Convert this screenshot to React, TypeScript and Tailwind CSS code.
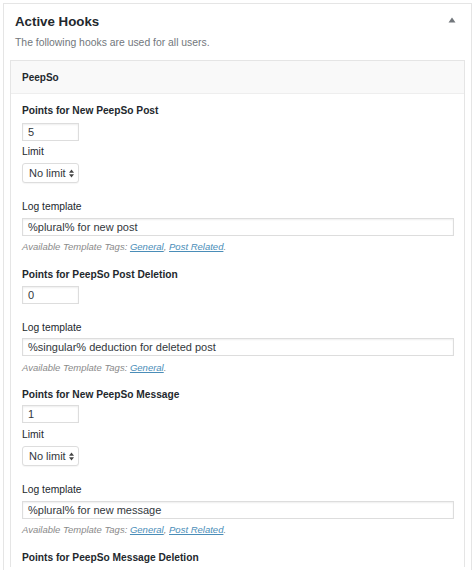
import React from 'react';

const font = { fontFamily: '"Liberation Sans", Arial, sans-serif' };

function NumberInput({ value }: { value: string }) {
  return (
    <div className="w-[57px] h-[18px] border border-[#dddddd] bg-white shadow-[inset_0_1px_2px_rgba(0,0,0,0.07)] px-[5px] text-[11px] leading-[16px] text-[#32373c]">
      {value}
    </div>
  );
}

function TextInput({ value }: { value: string }) {
  return (
    <div className="w-[432px] h-[18px] border border-[#dddddd] bg-white shadow-[inset_0_1px_2px_rgba(0,0,0,0.07)] px-[5px] text-[11px] leading-[16px] text-[#32373c] whitespace-nowrap">
      {value}
    </div>
  );
}

function LimitSelect() {
  return (
    <div className="w-[57px] h-[20px] border border-[#dddddd] rounded-[3px] bg-white shadow-[0_1px_1px_rgba(0,0,0,0.04)] pl-[6px] pr-[4px] flex items-center justify-between text-[11px] text-[#32373c] whitespace-nowrap">
      <span>No limit</span>
      <svg width="5" height="9" viewBox="0 0 5 9">
        <path d="M2.5 0.5 L5 3.8 L0 3.8 Z" fill="#444" />
        <path d="M2.5 8.5 L5 5.2 L0 5.2 Z" fill="#444" />
      </svg>
    </div>
  );
}

function Tags({ post }: { post?: boolean }) {
  return (
    <div className="h-[14px] leading-[14px] text-[9.5px] italic text-[#8a8a8a] whitespace-nowrap">
      Available Template Tags: <span className="underline text-[#4a8db8]">General</span>
      {post && (
        <>
          , <span className="underline text-[#4a8db8]">Post Related</span>
        </>
      )}
      .
    </div>
  );
}

function Label({ children, bold, className = '' }: { children: React.ReactNode; bold?: boolean; className?: string }) {
  return (
    <div className={`h-[18px] leading-[18px] whitespace-nowrap text-[#23282d] ${bold ? 'font-bold text-[10.2px]' : 'text-[10.3px]'} ${className}`}>
      {children}
    </div>
  );
}

export default function App() {
  return (
    <div className="w-[474px] h-[570px] bg-white overflow-hidden pt-[3px] pl-[3px]" style={font}>
      <div className="w-[469px] h-[580px] border border-[#e5e5e5] bg-white">
        {/* Panel heading */}
        <div className="flex items-start justify-between pl-[11px] pr-[15px] pt-[8px]">
          <h2 className="text-[13.3px] leading-[20px] font-bold text-[#23282d]">Active Hooks</h2>
          <svg width="8" height="6" viewBox="0 0 8 6" className="mt-[5px]">
            <path d="M4 0.5 L7.5 5.5 L0.5 5.5 Z" fill="#72777c" />
          </svg>
        </div>
        <p className="pl-[11px] mt-[3px] text-[10.4px] leading-[16px] text-[#72777c]">The following hooks are used for all users.</p>

        {/* PeepSo box */}
        <div className="ml-[6px] mt-[9px] w-[455px] border border-[#e5e5e5] border-b-0">
          <div className="h-[33px] bg-[#f9f9f9] border-b border-[#eeeeee] pl-[11px] flex items-center">
            <span className="text-[10px] font-bold text-[#23282d]">PeepSo</span>
          </div>

          <div className="pl-[11px] pt-[8px]">
            <Label bold>Points for New PeepSo Post</Label>
            <div className="mt-[3px]"><NumberInput value="5" /></div>
            <Label className="mt-[2px]">Limit</Label>
            <div className="mt-[2px]"><LimitSelect /></div>
            <Label className="mt-[15px]">Log template</Label>
            <div className="mt-[2px]"><TextInput value="%plural% for new post" /></div>
            <div className="mt-[4px]"><Tags post /></div>

            <Label bold className="mt-[12px]">Points for PeepSo Post Deletion</Label>
            <div className="mt-[2px]"><NumberInput value="0" /></div>
            <Label className="mt-[15px]">Log template</Label>
            <div className="mt-[1px]"><TextInput value="%singular% deduction for deleted post" /></div>
            <div className="mt-[5px]"><Tags /></div>

            <Label bold className="mt-[11px]">Points for New PeepSo Message</Label>
            <div className="mt-[1px]"><NumberInput value="1" /></div>
            <Label className="mt-[3px]">Limit</Label>
            <div className="mt-[2px]"><LimitSelect /></div>
            <Label className="mt-[15px]">Log template</Label>
            <div className="mt-[2px]"><TextInput value="%plural% for new message" /></div>
            <div className="mt-[4px]"><Tags post /></div>

            <Label bold className="mt-[12px]">Points for PeepSo Message Deletion</Label>
          </div>
        </div>
      </div>
    </div>
  );
}
